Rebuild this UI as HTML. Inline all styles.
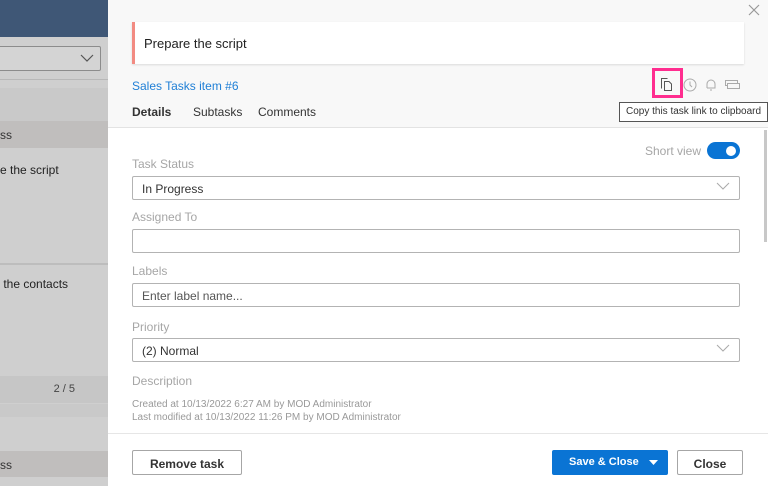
<!DOCTYPE html>
<html><head><style>
*{box-sizing:border-box;margin:0;padding:0}
body{width:768px;height:486px;overflow:hidden;position:relative;font-family:"Liberation Sans",sans-serif;background:#fff}
.abs{position:absolute}
.lbl{position:absolute;left:132px;font-size:12px;color:#a6a6a6}
.inp{position:absolute;left:132px;width:608px;height:24px;border:1px solid #b3b3b3;border-radius:2px;background:#fff;font-size:12px;color:#333;padding:5px 9px}
.chev{position:absolute;right:9px;top:5px}
</style></head><body>
<div class="abs" style="left:0;top:0;width:108px;height:486px;background:#cfcfcf"></div>
<div class="abs" style="left:0;top:0;width:108px;height:37px;background:#3f5776"></div>
<div class="abs" style="left:-4px;top:46px;width:105px;height:25px;border:1px solid #8c8c8c;border-radius:2px;background:#d4d4d4"></div>
<svg class="abs" style="left:80px;top:54px" width="14" height="9"><path d="M1 1 L7 7 L13 1" stroke="#555" fill="none" stroke-width="1.2"/></svg>
<div class="abs" style="left:0;top:79px;width:108px;height:1px;background:#b8b8b8"></div>
<div class="abs" style="left:0;top:88px;width:108px;height:33px;background:#c9c9c9"></div>
<div class="abs" style="left:0;top:121px;width:108px;height:27px;background:#c0bebd;font-size:12px;color:#333;padding:7px 0 0 0">ss</div>
<div class="abs" style="left:0;top:163px;font-size:12px;color:#222">e the script</div>
<div class="abs" style="left:0;top:263px;width:108px;height:2px;background:#bdbdbd"></div>
<div class="abs" style="left:0;top:277px;font-size:12px;color:#222">&nbsp;the contacts</div>
<div class="abs" style="left:0;top:376px;width:108px;height:27px;background:#c6c6c6;font-size:11px;color:#444;text-align:right;padding:7px 33px 0 0">2 / 5</div>
<div class="abs" style="left:0;top:404px;width:108px;height:13px;background:#c9c9c9"></div>
<div class="abs" style="left:0;top:451px;width:108px;height:26px;background:#c0bebd;font-size:12px;color:#333;padding:7px 0 0 0">ss</div>
<div class="abs" style="left:108px;top:0;width:660px;height:128px;background:#f8f8f8;border-bottom:1px solid #e3e3e3"></div>
<svg class="abs" style="left:748px;top:4px" width="12" height="12"><path d="M1 1L11 11M11 1L1 11" stroke="#999" stroke-width="1.2"/></svg>
<div class="abs" style="left:132px;top:22px;width:612px;height:42px;background:#fff;box-shadow:0 1px 2px rgba(0,0,0,.12);border-left:3px solid #f28b82;font-size:13px;color:#222;padding:14px 0 0 9px">Prepare the script</div>
<div class="abs" style="left:132px;top:79px;font-size:12px;color:#1f7fd6">Sales Tasks item #6</div>
<div class="abs" style="left:132px;top:105px;font-size:12px;color:#333;font-weight:bold">Details</div>
<div class="abs" style="left:193px;top:105px;font-size:12px;color:#333">Subtasks</div>
<div class="abs" style="left:258px;top:105px;font-size:12px;color:#333">Comments</div>
<div class="abs" style="left:652px;top:68px;width:31px;height:30px;border:3px solid #ff2d8f"></div>
<svg class="abs" style="left:660px;top:77px" width="14" height="15"><path d="M1.5 11.5V1.5H7.5" stroke="#555" fill="none"/><path d="M4.5 4.5H9L11.5 7V13.5H4.5Z" stroke="#555" fill="none"/></svg>
<svg class="abs" style="left:683px;top:78px" width="14" height="14"><circle cx="7" cy="7" r="6" stroke="#aaa" fill="none"/><path d="M7 3.5V7L9 9" stroke="#aaa" fill="none"/></svg>
<svg class="abs" style="left:705px;top:78px" width="12" height="14"><path d="M2 10V6a4 4 0 0 1 8 0v4H2M5 12h2" stroke="#aaa" fill="none"/></svg>
<svg class="abs" style="left:725px;top:80px" width="15" height="10"><rect x="0.5" y="0.5" width="12" height="5" stroke="#aaa" fill="none"/><rect x="2.5" y="3.5" width="12" height="5" stroke="#aaa" fill="#f8f8f8"/></svg>
<div class="abs" style="left:619px;top:102px;width:149px;height:20px;border:1px solid #555;background:#fff;font-size:10px;color:#333;padding:3px 0 0 6px;white-space:nowrap">Copy this task link to clipboard</div>
<div class="abs" style="left:764px;top:130px;width:3px;height:112px;background:#c8c8c8"></div>
<div class="abs" style="left:645px;top:144px;font-size:12px;color:#a6a6a6">Short view</div>
<div class="abs" style="left:707px;top:142px;width:33px;height:17px;border-radius:9px;background:#0a74d4"></div>
<div class="abs" style="left:726px;top:146px;width:10px;height:10px;border-radius:5px;background:#fff"></div>
<div class="lbl" style="top:157px">Task Status</div>
<div class="inp" style="top:176px">In Progress<svg class="chev" width="14" height="9"><path d="M1 1L7 7L13 1" stroke="#aaa" fill="none"/></svg></div>
<div class="lbl" style="top:210px">Assigned To</div>
<div class="inp" style="top:229px"></div>
<div class="lbl" style="top:264px">Labels</div>
<div class="inp" style="top:283px;color:#555">Enter label name...</div>
<div class="lbl" style="top:320px">Priority</div>
<div class="inp" style="top:338px">(2) Normal<svg class="chev" width="14" height="9"><path d="M1 1L7 7L13 1" stroke="#aaa" fill="none"/></svg></div>
<div class="lbl" style="top:374px">Description</div>
<div class="lbl" style="top:399px;font-size:10px;color:#999">Created at 10/13/2022 6:27 AM by MOD Administrator</div>
<div class="lbl" style="top:412px;font-size:10px;color:#999">Last modified at 10/13/2022 11:26 PM by MOD Administrator</div>
<div class="abs" style="left:108px;top:433px;width:660px;height:1px;background:#e6e6e6"></div>
<div class="abs" style="left:132px;top:450px;width:110px;height:25px;border:1px solid #a6a6a6;border-radius:2px;font-size:12px;font-weight:bold;color:#333;text-align:center;padding-top:6px">Remove task</div>
<div class="abs" style="left:552px;top:450px;width:116px;height:25px;background:#0a74d4;border-radius:2px;font-size:11px;font-weight:bold;color:#fff;padding:6px 0 0 17px">Save &amp; Close</div>
<svg class="abs" style="left:649px;top:460px" width="9" height="6"><path d="M0 0H9L4.5 5Z" fill="#fff"/></svg>
<div class="abs" style="left:677px;top:450px;width:66px;height:25px;border:1px solid #a6a6a6;border-radius:2px;font-size:12px;font-weight:bold;color:#333;text-align:center;padding-top:6px">Close</div>
</body></html>
